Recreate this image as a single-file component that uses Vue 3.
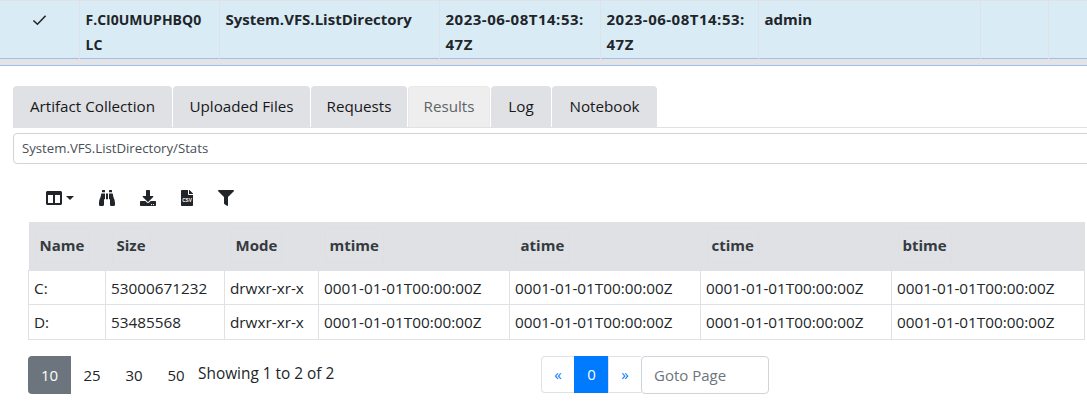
<script setup>
const tabs = ['Artifact Collection', 'Uploaded Files', 'Requests', 'Results', 'Log', 'Notebook']
const columns = ['Name', 'Size', 'Mode', 'mtime', 'atime', 'ctime', 'btime']
const rows = [
  ['C:', '53000671232', 'drwxr-xr-x', '0001-01-01T00:00:00Z', '0001-01-01T00:00:00Z', '0001-01-01T00:00:00Z', '0001-01-01T00:00:00Z'],
  ['D:', '53485568', 'drwxr-xr-x', '0001-01-01T00:00:00Z', '0001-01-01T00:00:00Z', '0001-01-01T00:00:00Z', '0001-01-01T00:00:00Z']
]
const pageSizes = [10, 25, 30, 50]
</script>

<template>
  <div class="page">
    <table class="flows">
      <tbody>
        <tr>
          <td class="state">
            <svg viewBox="0 0 16 12" width="15" height="12"><path d="M1.5 6.5 L5.8 10.5 L14.5 1.5" fill="none" stroke="#212529" stroke-width="1.7" /></svg>
          </td>
          <td class="flow-id">F.CI0UMUPHBQ0<br />LC</td>
          <td class="flow-name">System.VFS.ListDirectory</td>
          <td class="flow-time">2023-06-08T14:53:<br />47Z</td>
          <td class="flow-time2">2023-06-08T14:53:<br />47Z</td>
          <td class="flow-user">admin</td>
          <td class="flow-a"></td>
          <td></td>
        </tr>
      </tbody>
    </table>
    <div class="splitter"></div>

    <div class="details">
      <div class="tabs">
        <a v-for="t in tabs" :key="t" class="tab" :class="{ active: t === 'Results' }">{{ t }}</a>
      </div>
      <div class="path">System.VFS.ListDirectory/Stats</div>

      <div class="toolbar">
        <span class="tool cols">
          <svg viewBox="0 0 512 512" width="16" height="16"><path d="M464 32H48C21.49 32 0 53.49 0 80v352c0 26.51 21.49 48 48 48h416c26.51 0 48-21.49 48-48V80c0-26.51-21.49-48-48-48zM224 416H64V160h160v256zm224 0H288V160h160v256z" /></svg>
          <i class="caret"></i>
        </span>
        <span class="tool">
          <svg viewBox="0 32 512 448" preserveAspectRatio="none" width="16" height="16"><path d="M416 48c0-8.84-7.16-16-16-16h-64c-8.84 0-16 7.16-16 16v48h96V48zM63.91 159.99C61.4 253.84 3.46 274.22 0 404v44c0 17.67 14.33 32 32 32h96c17.67 0 32-14.33 32-32V288h32V128H95.84c-17.63 0-31.45 14.37-31.93 31.99zm384.18 0c-.48-17.62-14.3-31.99-31.93-31.99H320v160h32v160c0 17.67 14.33 32 32 32h96c17.67 0 32-14.33 32-32v-44c-3.46-129.78-61.4-150.16-63.91-244.01zM176 32h-64c-8.84 0-16 7.16-16 16v48h96V48c0-8.84-7.16-16-16-16zm48 256h64V128h-64v160z" /></svg>
        </span>
        <span class="tool">
          <svg viewBox="0 0 512 512" width="16" height="16"><path d="M216 0h80c13.3 0 24 10.7 24 24v168h87.7c17.8 0 26.7 21.5 14.1 34.1L269.7 378.3c-7.5 7.5-19.8 7.5-27.3 0L90.1 226.1c-12.6-12.6-3.7-34.1 14.1-34.1H192V24c0-13.3 10.7-24 24-24zm296 376v112c0 13.3-10.7 24-24 24H24c-13.3 0-24-10.7-24-24V376c0-13.3 10.7-24 24-24h146.7l49 49c20.1 20.1 52.5 20.1 72.6 0l49-49H488c13.3 0 24 10.7 24 24zm-124 88c0-11-9-20-20-20s-20 9-20 20 9 20 20 20 20-9 20-20zm64 0c0-11-9-20-20-20s-20 9-20 20 9 20 20 20 20-9 20-20z" /></svg>
        </span>
        <span class="tool">
          <svg viewBox="0 0 384 512" width="12" height="16">
            <path d="M224 136V0H24C10.7 0 0 10.7 0 24v464c0 13.3 10.7 24 24 24h336c13.3 0 24-10.7 24-24V160H248c-13.2 0-24-10.8-24-24zM384 121.9c0-6.3-2.5-12.4-7-16.9L279.1 7c-4.5-4.5-10.6-7-17-7H256v128h128v-6.1z" />
            <text x="192" y="390" text-anchor="middle" class="csv">CSV</text>
          </svg>
        </span>
        <span class="tool">
          <svg viewBox="0 0 512 512" width="16" height="16"><path d="M487.976 0H24.028C2.71 0-8.047 25.866 7.058 40.971L192 225.941V432c0 7.831 3.821 15.17 10.237 19.662l80 55.98C298.02 518.69 320 507.493 320 487.98V225.941l184.947-184.97C520.021 25.896 509.338 0 487.976 0z" /></svg>
        </span>
      </div>

      <table class="results">
        <thead>
          <tr>
            <th v-for="c in columns" :key="c"><span class="th-inner">{{ c }}</span></th>
          </tr>
        </thead>
        <tbody>
          <tr v-for="r in rows" :key="r[0]">
            <td v-for="(v, i) in r" :key="i">{{ v }}</td>
          </tr>
        </tbody>
      </table>

      <div class="footer">
        <div class="footer-left">
          <div class="sizes">
            <span v-for="s in pageSizes" :key="s" class="size" :class="{ current: s === 10 }">{{ s }}</span>
          </div>
          <span class="showing">Showing 1 to 2 of 2</span>
        </div>
        <div class="pager">
          <span class="pg first">«</span>
          <span class="pg on">0</span>
          <span class="pg last">»</span>
          <input class="goto" placeholder="Goto Page" />
        </div>
      </div>
    </div>
  </div>
</template>

<style scoped>
.page {
  width: 1087px;
  height: 414px;
  overflow: hidden;
  font-family: "Open Sans", "Noto Sans", sans-serif;
  font-size: 15px;
  color: #212529;
  background: #fff;
}

.flows {
  width: 1087px;
  height: 59px;
  table-layout: fixed;
  border-collapse: collapse;
  background: #d9ecf6;
  border-top: 1px solid #dee2e6;
  border-bottom: 1px solid #9fbdf3;
  font-weight: 700;
  font-size: 15px;
  line-height: 25px;
}

.flows td {
  box-sizing: border-box;
  vertical-align: top;
  padding: 6px 5px 0 6px;
  border-left: 1px solid #dee2e6;
}

.flows td:first-child { border-left: 0; width: 79px; text-align: center; padding: 7px 0 0; }
.flow-id { width: 140px; font-size: 14px; }
.flow-name { width: 220px; }
.flow-time { width: 161px; }
.flow-time2 { width: 158px; }
.flow-time, .flow-time2 { letter-spacing: .5px; }
.flow-user { width: 222px; }
.flow-a { width: 68px; }

.splitter {
  height: 6px;
  background: #e4e4e4;
  border-bottom: 1px solid #9fbdf3;
}

.details { padding: 20px 0 0 13px; }

.tabs {
  display: flex;
  gap: 1px;
  height: 41px;
  border-bottom: 1px solid #dee2e6;
}

.tab {
  display: block;
  box-sizing: border-box;
  height: 41px;
  line-height: 41px;
  text-align: center;
  font-size: 15.2px;
  background: #e0e1e4;
  border-radius: 4px 4px 0 0;
  color: #16181b;
}

.tab:nth-child(1) { width: 159px; }
.tab:nth-child(2) { width: 137px; }
.tab:nth-child(3) { width: 96px; }
.tab:nth-child(4) { width: 82px; }
.tab:nth-child(5) { width: 60px; }
.tab:nth-child(6) { width: 105px; }

.tab.active {
  background: #eeeeee;
  color: #5f6468;
  border: 1px solid #e9e9e9;
  border-bottom: 0;
  line-height: 39px;
}

.path {
  margin: 5px -20px 0 0;
  height: 31px;
  box-sizing: border-box;
  border: 1px solid #ced4da;
  border-radius: 4px;
  padding-left: 8px;
  line-height: 29px;
  font-size: 13.2px;
  color: #495057;
}

.toolbar {
  display: flex;
  align-items: center;
  gap: 25px;
  margin: 26px 0 0 33px;
  height: 16px;
}

.tool { display: inline-flex; align-items: center; }
.tool svg { fill: #212529; }
.cols { gap: 4px; }

.caret {
  width: 0;
  height: 0;
  border-left: 4px solid transparent;
  border-right: 4px solid transparent;
  border-top: 4px solid #212529;
}

.csv {
  fill: #fff;
  font-family: "Liberation Sans", sans-serif;
  font-size: 150px;
  font-weight: 700;
}

.results {
  margin: 16px 0 0 15px;
  width: 1056px;
  table-layout: fixed;
  border-collapse: collapse;
  font-size: 15.3px;
}

.results th {
  box-sizing: border-box;
  height: 48px;
  padding: 0 6px;
  background: #dfe1e4;
  text-align: left;
  font-weight: 700;
  font-size: 15px;
  color: #343a40;
}

.results th:nth-child(1) { width: 77px; }
.results th:nth-child(2) { width: 119px; }
.results th:nth-child(3) { width: 94px; }
.results th:nth-child(n+4) { width: 191px; }
.results th:nth-child(7) { width: 193px; }

.th-inner {
  display: inline-block;
  padding: 6px 4px 7px;
  border: 1px solid #dddfe2;
}

.results td {
  height: 34px;
  box-sizing: border-box;
  padding: 1px 5px 0;
  border: 1px solid #dee2e6;
  white-space: nowrap;
}

.results tbody tr:last-child td { height: 35px; }

.footer {
  display: flex;
  align-items: flex-start;
  margin: 16px 0 0 15px;
}

.footer-left { display: flex; width: 513px; }
.sizes { display: flex; }

.size {
  width: 42px;
  height: 38px;
  line-height: 38px;
  text-align: center;
  font-size: 15px;
}

.size.current {
  width: 43px;
  background: #6c757d;
  color: #fff;
  border-radius: 4px 0 0 4px;
}

.showing {
  margin-left: 1px;
  line-height: 35px;
  font-size: 15.4px;
}

.pager { display: flex; }

.pg {
  width: 33px;
  height: 37px;
  line-height: 35px;
  text-align: center;
  box-sizing: border-box;
  border: 1px solid #dee2e6;
  border-right: 0;
  color: #007bff;
  font-size: 15px;
}

.pg.first { border-radius: 4px 0 0 4px; }
.pg.on { width: 34px; background: #007bff; border-color: #007bff; color: #fff; }

.goto {
  width: 128px;
  height: 38px;
  box-sizing: border-box;
  border: 1px solid #ced4da;
  border-radius: 4px;
  padding: 0 12px;
  font-family: inherit;
  font-size: 15px;
  outline: none;
}

.goto::placeholder { color: #6c757d; }
</style>

<style>
html, body { margin: 0; background: #fff; }
</style>
